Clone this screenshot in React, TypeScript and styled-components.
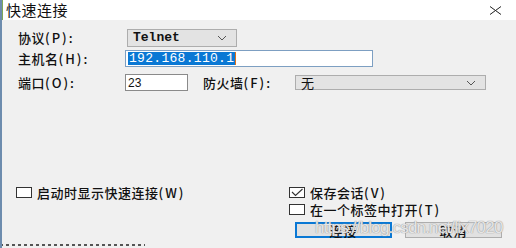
import React from "react";
import styled, { createGlobalStyle } from "styled-components";

const GlobalStyle = createGlobalStyle`
  html, body {
    margin: 0;
    padding: 0;
    background: #f0f0f0;
  }
  body {
    font-family: "Noto Sans CJK SC", "Liberation Sans", sans-serif;
    font-size: 13px;
    font-weight: 500;
    color: #111;
  }
`;

const App: React.FC = () => {
  return (
    <>
      <GlobalStyle />
      <Window>
        <TitleBar>
          <Title>快速连接</Title>
          <CloseButton aria-label="关闭">
            <svg width="13" height="9" viewBox="0 0 13 9">
              <path d="M1 0.5 L12 8.5 M12 0.5 L1 8.5" stroke="#222" strokeWidth="1" fill="none" />
            </svg>
          </CloseButton>
        </TitleBar>

        <Body>
          <Form>
            <Row>
              <Label>
                协议<Key>(P):</Key>
              </Label>
              <Select $width={110} $height={18} $offset={2} $mono>
                <span>Telnet</span>
                <Chevron />
              </Select>
            </Row>

            <Row $gap={2}>
              <Label>
                主机名<Key>(H):</Key>
              </Label>
              <TextField $width={248} $focused>
                <Selected>192.168.110.1</Selected>
                <Caret />
              </TextField>
            </Row>

            <Row $gap={5}>
              <Label>
                端口<Key>(O):</Key>
              </Label>
              <TextField $width={63}>23</TextField>
              <Label $width={107} $indent={15}>
                防火墙<Key>(F):</Key>
              </Label>
              <Select $width={191} $height={15}>
                <span>无</span>
                <Chevron />
              </Select>
            </Row>
          </Form>

          <Footer>
            <Column>
              <Check label="启动时显示快速连接" hotkey="(W)" />
            </Column>
            <Column>
              <Check label="保存会话" hotkey="(V)" checked />
              <Check label="在一个标签中打开" hotkey="(T)" />
              <Buttons>
                <Button $primary>连接</Button>
                <Button>取消</Button>
              </Buttons>
            </Column>
          </Footer>
        </Body>

        <Taskbar />
        <Watermark>https://blog.csdn.net/lix7020</Watermark>
      </Window>
    </>
  );
};

interface CheckProps {
  label: string;
  hotkey: string;
  checked?: boolean;
}

const Check: React.FC<CheckProps> = ({ label, hotkey, checked }) => (
  <CheckRow>
    <Box>
      {checked && (
        <svg width="14" height="9" viewBox="0 0 14 9">
          <path d="M2 4 L5.5 7.5 L12.5 1" stroke="#333" strokeWidth="1.1" fill="none" />
        </svg>
      )}
    </Box>
    <span>
      {label}
      <Key>{hotkey}</Key>
    </span>
  </CheckRow>
);

const Chevron: React.FC = () => (
  <svg width="10" height="6" viewBox="0 0 10 6">
    <path d="M1 1 L5 5 L9 1" stroke="#555" strokeWidth="1" fill="none" />
  </svg>
);

const Window = styled.div`
  position: relative;
  width: 516px;
  height: 248px;
  overflow: hidden;
  display: flex;
  flex-direction: column;
  background: #f0f0f0;
  box-sizing: border-box;
  border-left: 2px solid #6d8cae;
`;

const TitleBar = styled.div`
  height: 20px;
  flex: none;
  display: flex;
  align-items: center;
  justify-content: space-between;
  background: #fff;
  padding: 0 14px 0 3px;
  margin-left: -2px;
  border-left: 3px solid #7ea75a;
`;

const Title = styled.div`
  font-size: 15px;
  font-weight: 400;
  letter-spacing: 0.5px;
  line-height: 20px;
`;

const CloseButton = styled.div`
  display: flex;
  align-items: center;
  padding-top: 1px;
`;

const Body = styled.div`
  flex: 1;
  display: flex;
  flex-direction: column;
  padding: 8px 0 3px 14px;
`;

const Form = styled.div`
  display: flex;
  flex-direction: column;
`;

const Row = styled.div<{ $gap?: number }>`
  display: flex;
  align-items: center;
  margin-top: ${(p) => p.$gap ?? 0}px;
`;

const Label = styled.div<{ $width?: number; $indent?: number }>`
  width: ${(p) => p.$width ?? 109}px;
  padding-left: ${(p) => p.$indent ?? 2}px;
  box-sizing: border-box;
  flex: none;
  font-size: 13px;
  letter-spacing: 0.5px;
  white-space: nowrap;
`;

const Key = styled.span`
  letter-spacing: 2px;
`;

const Select = styled.div<{ $width: number; $height: number; $offset?: number; $mono?: boolean }>`
  width: ${(p) => p.$width}px;
  height: ${(p) => p.$height}px;
  margin-left: ${(p) => p.$offset ?? 0}px;
  box-sizing: border-box;
  display: flex;
  align-items: center;
  justify-content: space-between;
  padding: 0 9px 0 5px;
  background: #e3e3e3;
  border: 1px solid #adadad;
  font-family: ${(p) =>
    p.$mono ? '"Liberation Mono", monospace' : '"Noto Sans CJK SC", sans-serif'};
  font-weight: ${(p) => (p.$mono ? 700 : 400)};
  font-size: 13px;
`;

const TextField = styled.div<{ $width: number; $focused?: boolean }>`
  width: ${(p) => p.$width}px;
  height: 17px;
  box-sizing: border-box;
  display: flex;
  align-items: center;
  padding-left: 2px;
  background: #fff;
  border: 1px solid ${(p) => (p.$focused ? "#7d9fc2" : "#8a8a8a")};
  font-family: "Liberation Sans", sans-serif;
  font-weight: 400;
  font-size: 12px;
`;

const Selected = styled.span`
  background: #0a78d4;
  color: #fff;
  font-family: "Liberation Mono", monospace;
  font-size: 13px;
  line-height: 13px;
  padding: 0 1px;
  letter-spacing: 0.3px;
`;

const Caret = styled.span`
  width: 1px;
  height: 13px;
  background: #e0701a;
`;

const Footer = styled.div`
  margin-top: auto;
  display: grid;
  grid-template-columns: 273px 1fr;
`;

const Column = styled.div`
  display: flex;
  flex-direction: column;
  gap: 2px;
`;

const CheckRow = styled.label`
  display: flex;
  align-items: center;
  gap: 5px;
  height: 15px;
  line-height: 15px;
  font-size: 13px;
  letter-spacing: 0.5px;
  white-space: nowrap;
`;

const Box = styled.span`
  width: 16px;
  height: 11px;
  box-sizing: border-box;
  border: 1px solid #333;
  background: #fff;
  display: flex;
  align-items: center;
  justify-content: center;
`;

const Buttons = styled.div`
  display: flex;
  gap: 13px;
  padding-left: 6px;
  margin-top: 3px;
`;

const Button = styled.div<{ $primary?: boolean }>`
  width: 97px;
  height: 16px;
  box-sizing: border-box;
  display: flex;
  align-items: center;
  justify-content: center;
  background: #e1e1e1;
  border: 1px solid ${(p) => (p.$primary ? "#0a78d4" : "#adadad")};
  box-shadow: ${(p) => (p.$primary ? "inset 0 0 0 1px #0a78d4" : "none")};
  font-size: 13px;
  letter-spacing: 1px;
`;

const Taskbar = styled.div`
  height: 7px;
  flex: none;
  margin-left: -2px;
  background:
    repeating-linear-gradient(90deg, #555 0 3px, transparent 3px 6px) 0 3px / 145px 2px no-repeat,
    #f0f0f0;
`;

const Watermark = styled.div`
  position: absolute;
  left: 313px;
  top: 218px;
  font-family: "Liberation Sans", sans-serif;
  font-size: 17px;
  font-weight: 400;
  color: rgba(255, 255, 255, 0.75);
  text-shadow: 0 0 1px #9a9a9a, 0 0 1px #9a9a9a;
  letter-spacing: -0.8px;
  white-space: nowrap;
  pointer-events: none;
`;

export default App;
